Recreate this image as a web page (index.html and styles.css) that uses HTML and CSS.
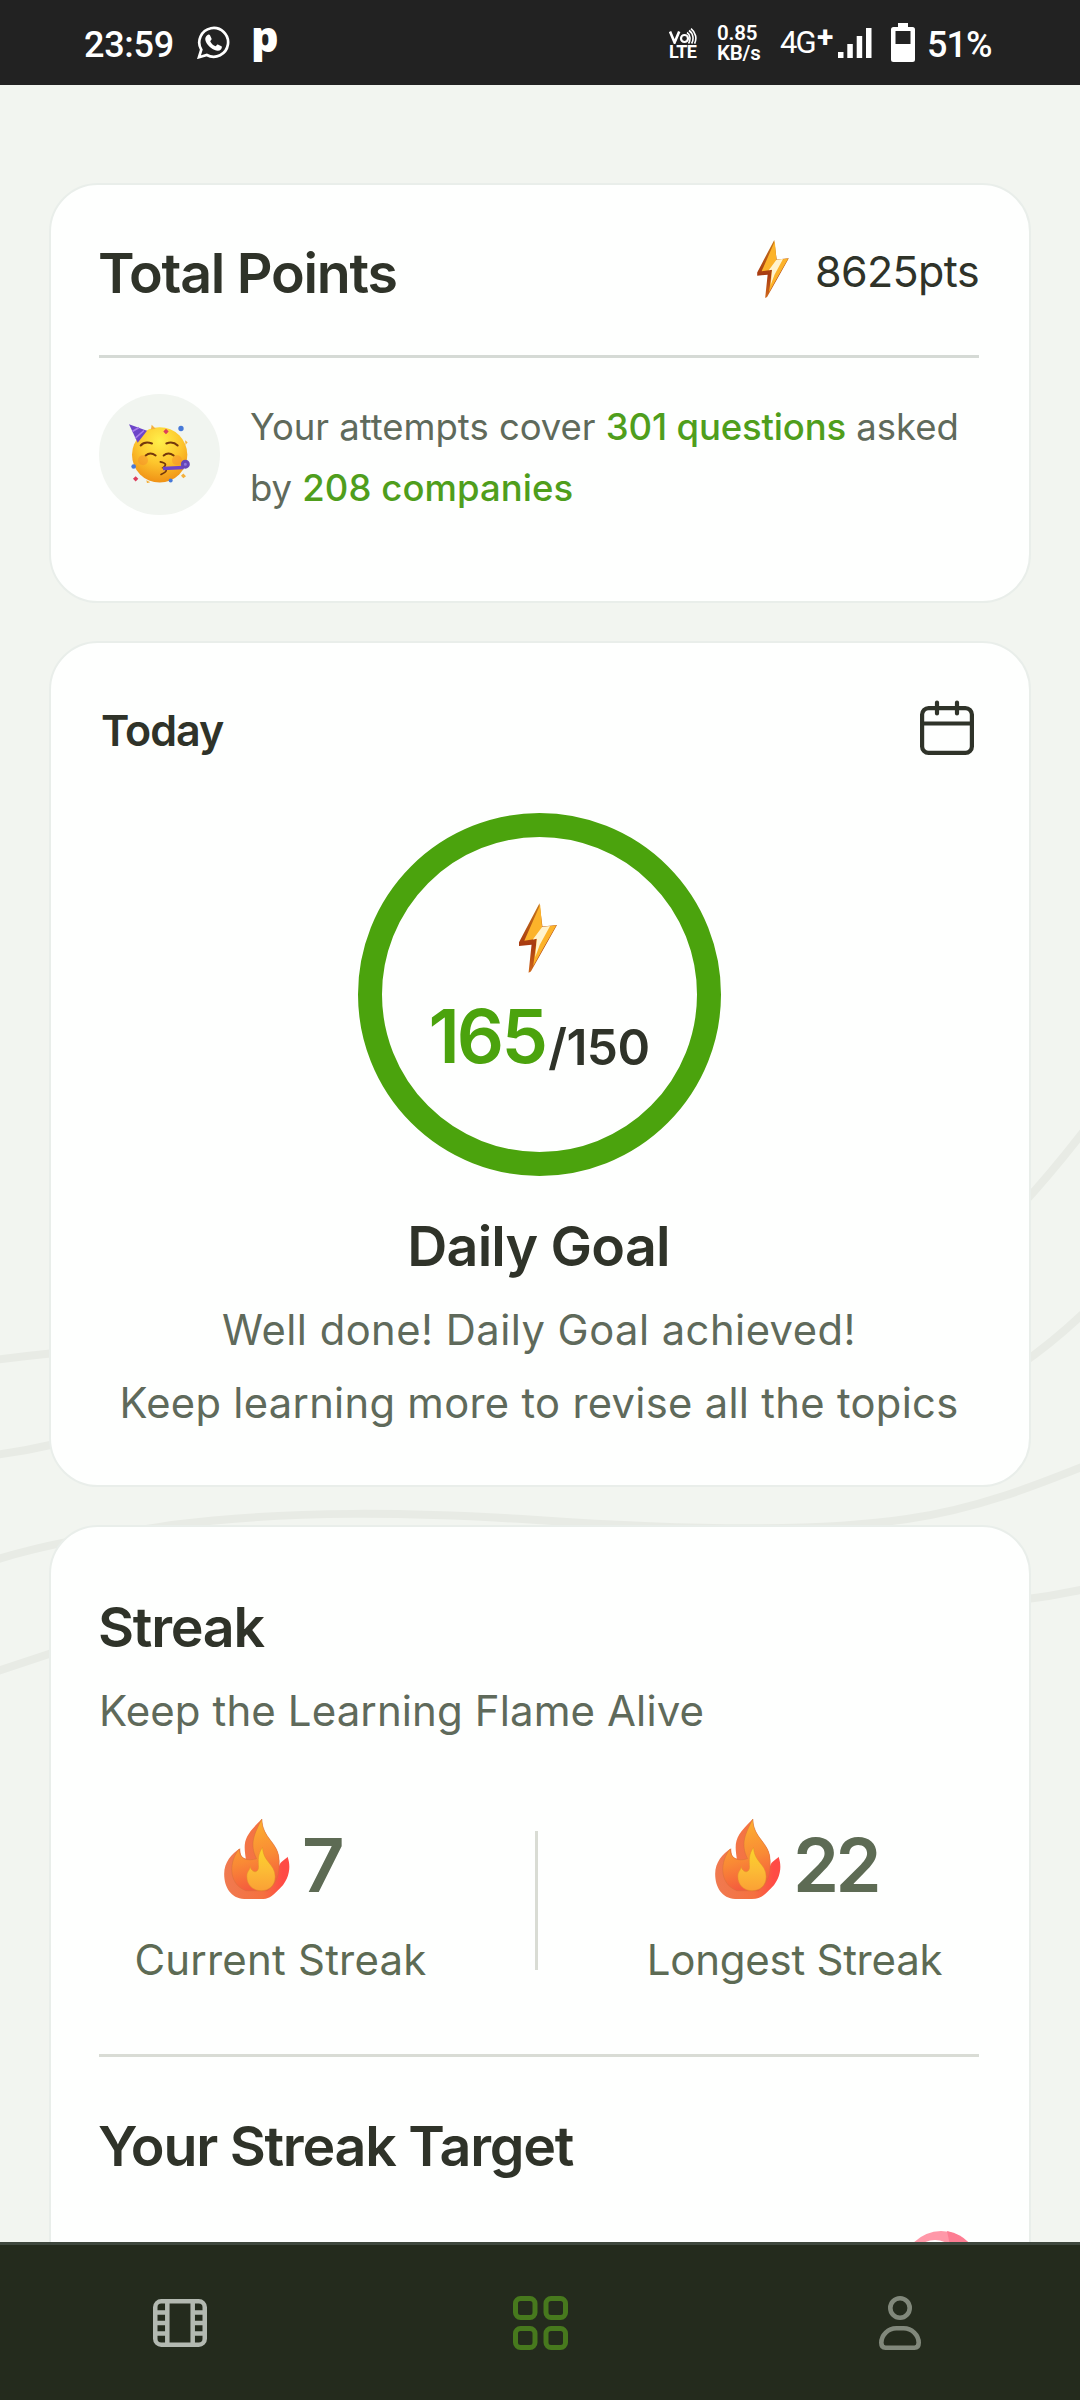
FILE: index.html
```html
<!DOCTYPE html>
<html lang="en">
<head>
<meta charset="utf-8">
<title>Progress</title>
<link rel="stylesheet" href="styles.css">
</head>
<body>
<svg class="defs" width="0" height="0" aria-hidden="true">
  <defs>
    <linearGradient id="flameBack" x1="0" y1="0" x2="1" y2="0">
      <stop offset="0" stop-color="#f07a50"/><stop offset=".6" stop-color="#f5713f"/><stop offset=".9" stop-color="#ff4b45"/>
    </linearGradient>
    <linearGradient id="flameFront" x1=".4" y1="0" x2=".6" y2="1">
      <stop offset="0" stop-color="#fdb32f"/><stop offset=".55" stop-color="#f98a35"/><stop offset="1" stop-color="#f4553f"/>
    </linearGradient>
    <linearGradient id="flameCore" x1="0" y1="0" x2="0" y2="1">
      <stop offset="0" stop-color="#fbd42a"/><stop offset=".5" stop-color="#fcbd35"/><stop offset="1" stop-color="#fba035"/>
    </linearGradient>
    <radialGradient id="face" cx=".5" cy=".25" r=".8">
      <stop offset="0" stop-color="#fff04a"/><stop offset=".5" stop-color="#fdc62d"/><stop offset="1" stop-color="#ee8a12"/>
    </radialGradient>
    <linearGradient id="boltEdge" x1="0" y1="0" x2="0" y2="1">
      <stop offset="0" stop-color="#c87a1c"/><stop offset=".6" stop-color="#a83a10"/><stop offset="1" stop-color="#d06a1c"/>
    </linearGradient>
    <symbol id="bolt" viewBox="0 0 115 211">
      <path fill="url(#boltEdge)" d="M62 0 0 118v12l38-4-9 85 7-4 79-141-44 5z"/>
      <path fill="#fcb32a" d="M64 5 16 114l38-6-11 82 70-123-43 6z"/>
      <path fill="#fff3cf" d="m70 72 24-3-31 57-14 38 5-56-12 2z"/>
    </symbol>
    <symbol id="flame" viewBox="0 0 197 240">
      <path fill="url(#flameBack)" d="M113 0C114 60 165 70 165 125v16c4-16 18-18 25-28 10 25 10 68-30 102-17 18-28 25-50 25H60C20 238 0 205 0 165c0-35 22-60 48-77 0 22 6 29 17 31C56 65 62 50 113 0z"/>
      <path fill="url(#flameFront)" stroke="#d5713a" stroke-width="1.500" d="M113 0C114 60 165 70 165 125c0 45-5 65-35 90H65C10 195 15 125 45 90c0 30 25 38 52 29C75 75 90 45 113 0z"/>
      <path fill="url(#flameCore)" stroke="#e08a2a" stroke-width="1.500" d="M115 85c2 45 38 50 38 88 0 28-20 42-42 42-25 0-43-18-43-42 0-18 10-18 10-31 5 22 25 20 25 3-1-22-3-38 12-60z"/>
    </symbol>
  </defs>
</svg>

<div class="screen">
  <header class="status">
    <div class="status-left">
      <span class="clock">23:59</span>
      <svg class="whatsapp" viewBox="0 0 33 33" width="33" height="33">
        <path fill="none" stroke="#fff" stroke-width="2.700" d="M2 31.200 4.300 23.700A14.400 14.400 0 1 1 9.800 29z"/>
        <path fill="#fff" d="M10.200 9.200c.8-1 2.300-1 2.800 0l1.500 3.300c.3.800-.1 1.400-1.300 2.700 1.300 2.600 3 4.200 5.500 5.100 1.500-1.700 1.900-1.900 2.600-1.600l3.200 1.600c.7.400.4 2.200-.6 3.200-1.600 1.500-3.900 1.500-6.800.3-4-1.700-7.600-5.500-8.700-9.500-.5-2 .3-4 1.800-5.100z"/>
      </svg>
      <span class="app-p">p</span>
    </div>
    <div class="status-right">
      <div class="volte">
        <svg viewBox="0 0 28 16" width="28" height="16" fill="none" stroke="#fff">
          <path stroke-width="2.600" d="m1 3.500 4.600 11 4.600-11"/><circle cx="15.500" cy="10.500" r="3.500" stroke-width="2.200"/>
          <path stroke-width="1.600" d="M18 4.500c3.500 2 3.800 8 1.500 11M20 2.500c4.500 3 5 9 2.600 13M22 .600c5 4 6 10 3.600 15"/>
        </svg>
        <span>LTE</span>
      </div>
      <div class="speed"><span>0.85</span><span>KB/s</span></div>
      <div class="net">4G<sup>+</sup></div>
      <svg class="signal" viewBox="0 0 34 30" width="34" height="30" fill="#fff"><path d="M0 24h5.500v6H0zM9.300 16h5.500v14H9.300zM18.700 8h5.500v22h-5.500zM28 0h5.500v30H28z"/></svg>
      <svg class="battery" viewBox="0 0 24 39" width="24" height="39"><path fill="#fff" fill-rule="evenodd" d="M7 0h10v4h4.500A2.500 2.500 0 0 1 24 6.500v30a2.500 2.500 0 0 1-2.500 2.500h-19A2.500 2.500 0 0 1 0 36.500v-30A2.500 2.500 0 0 1 2.500 4H7zM4.500 8v13h15V8z"/></svg>
      <span class="percent">51%</span>
    </div>
  </header>

  <main class="content">
    <svg class="waves" viewBox="0 0 1080 2157" width="1080" height="2157" fill="none">
      <path d="M-5 1275q30-4 60-7M-5 1370q30-4 60-11M-5 1475C60 1455 110 1450 172 1440c120-15 240-13 365-5 130 9 270 14 370-1 70-10 130-34 180-54M-5 1587q30-10 60-20M1020 1122q35-38 70-84M1020 1280q35-24 70-58M1020 1515q35-4 70-12"/>
    </svg>

    <section class="card points">
      <div class="points-head">
        <h2 class="title">Total Points</h2>
        <div class="score"><svg width="32" height="58"><use href="#bolt"/></svg><span>8625pts</span></div>
      </div>
      <hr>
      <div class="cover">
        <div class="badge">
          <svg viewBox="0 0 183 176" width="61" height="59">
            <circle cx="92" cy="92" r="83" fill="url(#face)"/>
            <path fill="#6c45c8" d="m0 0 54 20-28 36z"/><path stroke="#a77bea" stroke-width="5" d="m10 22 20-12M19 42l26-23"/>
            <g fill="none" stroke="#74380c" stroke-width="6" stroke-linecap="round"><path d="M35 64q12-14 34-6M112 58q20-8 34 6M50 94q14-12 30 0M104 94q14-12 30 0"/><path d="M94 113q26 5 8 18 22 8-6 20" stroke-width="5"/></g>
            <circle cx="42" cy="108" r="15" fill="#f58b2c" opacity=".45"/><circle cx="144" cy="108" r="15" fill="#f58b2c" opacity=".45"/>
            <path stroke="#6c45c8" stroke-width="10" d="m102 133 62-3"/><circle cx="169" cy="120" r="9" fill="#8f78dd" stroke="#6546b8" stroke-width="9"/>
            <g><path fill="#dd3d5c" d="m111 14 8 8-8 8-8-8zM20 156l8 8-8 8-8-8z"/><circle cx="156" cy="13" r="8" fill="#4779d8"/><circle cx="14" cy="127" r="7" fill="#4779d8"/><circle cx="125" cy="169" r="6" fill="#4779d8"/><path fill="#f4b13d" d="m68 2 12 12-14 2zM163 148l8 8-8 6-7-7zM168 48l8 6-6 8zM52 168l12 6-10 3z"/></g>
          </svg>
        </div>
        <p class="cover-text">Your attempts cover <b>301 questions</b> asked<br>by <b class="companies">208 companies</b></p>
      </div>
    </section>

    <section class="card today">
      <div class="today-head">
        <h3>Today</h3>
        <svg viewBox="0 0 54 55" width="54" height="55" fill="none" stroke="#2f3329" stroke-width="4.200" stroke-linecap="round"><rect x="2.100" y="8.100" width="49.800" height="44.800" rx="6.500"/><path d="M3 23.500h48M17 2.500v11M37 2.500v11"/></svg>
      </div>
      <div class="ring">
        <svg width="38" height="70"><use href="#bolt"/></svg>
        <div class="tally"><span class="done">165</span><span class="of">/150</span></div>
      </div>
      <h2 class="title goal">Daily Goal</h2>
      <p class="praise">Well done! Daily Goal achieved!</p>
      <p class="praise more">Keep learning more to revise all the topics</p>
    </section>

    <section class="card streak">
      <h2 class="title">Streak</h2>
      <p class="sub">Keep the Learning Flame Alive</p>
      <div class="stats">
        <div class="stat current">
          <div class="count"><svg width="66" height="80"><use href="#flame"/></svg><span>7</span></div>
          <p>Current Streak</p>
        </div>
        <div class="split"></div>
        <div class="stat longest">
          <div class="count"><svg width="66" height="80"><use href="#flame"/></svg><span>22</span></div>
          <p>Longest Streak</p>
        </div>
      </div>
      <hr>
      <h2 class="title">Your Streak Target</h2>
      <div class="target">
        <svg viewBox="0 0 76 76" width="76" height="76"><circle cx="38" cy="38" r="38" fill="#ff98a8"/><path fill="#fd7d92" d="M44 0a38 38 0 0 1 32 38H52z"/><circle cx="32" cy="34" r="25" fill="#fff"/></svg>
      </div>
    </section>
  </main>

  <nav class="tabs">
    <a><svg viewBox="0 0 54 48" width="54" height="48" fill="none" stroke="#b3b9b1" stroke-width="4.500"><rect x="2.250" y="2.250" width="49.500" height="43.500" rx="6"/><path d="M14.300 2v44M39.700 2v44"/><path d="M2 13.500h12M2 24h12M2 34.500h12M40 13.500h12M40 24h12M40 34.500h12"/></svg></a>
    <a><svg viewBox="0 0 55 54" width="55" height="54" fill="none" stroke="#47791d" stroke-width="5"><rect x="2.500" y="2.500" width="19.500" height="19" rx="5"/><rect x="33" y="2.500" width="19.500" height="19" rx="5"/><rect x="2.500" y="32.500" width="19.500" height="19" rx="5"/><rect x="33" y="32.500" width="19.500" height="19" rx="5"/></svg></a>
    <a><svg viewBox="0 0 42 54" width="42" height="54" fill="none" stroke="#81887b" stroke-width="4.600"><circle cx="21" cy="12" r="9.700"/><path d="M17.300 32.300h7.400c8 0 15 6.500 15 14.500 0 3-1.500 4.900-4.200 4.900h-29c-2.700 0-4.200-1.900-4.200-4.900 0-8 7-14.500 15-14.500z"/></svg></a>
  </nav>
</div>
</body>
</html>
```
FILE: styles.css
```css
* { box-sizing: border-box; margin: 0; padding: 0; }
body { background: #f2f5f0; font-family: Inter, "Liberation Sans", sans-serif; color: #2f3329; }
svg { display: block; flex: none; }
.defs { position: absolute; }

.screen { width: 1080px; height: 2400px; display: flex; flex-direction: column; overflow: hidden; }

.status { flex: none; height: 85px; background: #222; color: #fff; font-family: Roboto, sans-serif; display: flex; justify-content: space-between; padding: 0 86px 0 84px; }
.status-left, .status-right { display: flex; align-items: center; }
.clock, .percent { font-size: 36px; font-weight: 500; padding-top: 4px; }
.clock { width: 113px; letter-spacing: -.3px; }
.app-p { font: 800 43px/60px "Open Sans", sans-serif; margin-left: 21px; height: 73px; }
.volte { width: 28px; margin-right: 20px; padding-top: 2px; }
.volte span { display: block; font-size: 18px; line-height: 15px; font-weight: 700; letter-spacing: -.6px; }
.speed { display: flex; flex-direction: column; width: 44px; font-size: 20.500px; font-weight: 600; line-height: 20px; letter-spacing: -.2px; margin-right: 19px; }
.net { font-size: 31px; width: 50px; letter-spacing: -1.800px; display: flex; align-items: center; white-space: nowrap; margin-right: 8px; }
.net sup { font-size: 30px; font-weight: 700; line-height: 20px; margin: -11px 0 0 2px; }
.signal { margin-right: 19px; }
.battery { margin-right: 12px; }
.percent { width: 67px; letter-spacing: -.9px; }

.content { flex: 1; min-height: 0; position: relative; overflow: hidden; padding: 98px 49px 0; display: flex; flex-direction: column; gap: 38px; }
.waves { position: absolute; left: 0; top: 0; stroke: #e8ebe5; stroke-width: 8; }
.card { position: relative; flex: none; background: #fefffe; border: 2px solid #e9eeea; border-radius: 49px; padding: 50px 50px 0 48px; }
hr { border: 0; height: 3px; background: #d5dad5; }
.title { font-size: 55.500px; line-height: 60px; font-weight: 600; letter-spacing: -1.250px; text-indent: -1px; }

.points { height: 420px; }
.points-head { display: flex; justify-content: space-between; align-items: center; height: 76px; margin-bottom: 44px; }
.score { display: flex; align-items: center; gap: 26px; margin-top: -5px; }
.score svg { margin-top: -4px; }
.score span { font-size: 43px; letter-spacing: -.6px; }
.cover { display: flex; gap: 30px; margin-top: 36px; }
.badge { width: 121px; height: 121px; border-radius: 50%; background: #f1f5f0; display: flex; align-items: center; justify-content: center; }
.badge svg { margin-top: -3px; }
.cover-text { font-size: 36.500px; line-height: 61px; padding-top: 3px; color: #5f6a5b; letter-spacing: -.03px; white-space: nowrap; }
.cover-text b { font-weight: 450; color: #4f9e1c; letter-spacing: -.15px; }
.cover-text .companies { letter-spacing: .05px; }

.today { height: 846px; display: flex; flex-direction: column; align-items: center; }
.today-head { align-self: stretch; display: flex; justify-content: space-between; align-items: center; height: 74px; padding: 0 5px 0 2px; }
.today-head h3 { font-size: 43px; font-weight: 600; letter-spacing: -1px; }
.today-head svg { margin-top: -5px; }
.ring { width: 363px; height: 363px; border: 24px solid #4ba30d; border-radius: 50%; margin-top: 46px; padding-top: 66px; display: flex; flex-direction: column; align-items: center; }
.ring > svg { margin-left: -3px; }
.tally { display: flex; margin-top: 23px; line-height: 80px; }
.done { font-size: 74px; font-weight: 600; letter-spacing: -2.800px; color: #4ba30d; }
.of { font-size: 49.500px; font-weight: 600; letter-spacing: -.5px; margin: 11px 0 0 3px; }
.goal { margin-top: 40px; letter-spacing: -.8px; }
.praise { font-size: 41.700px; line-height: 73px; letter-spacing: .48px; color: #5f6a5b; margin-top: 18px; white-space: nowrap; }
.more { margin-top: 0; letter-spacing: .32px; }

.streak { height: 950px; padding-top: 70px; }
.sub { font-size: 42px; line-height: 60px; margin-top: 24px; letter-spacing: .1px; color: #5f6a5b; }
.stats { display: flex; justify-content: space-between; height: 166px; margin: 78px 0 69px; color: #5d6b54; }
.stat { display: flex; flex-direction: column; align-items: center; }
.current { width: 363px; }
.longest { width: 369px; }
.stat p { font-size: 42px; line-height: 50px; margin-top: 36px; letter-spacing: .2px; }
.longest p { letter-spacing: -.25px; }
.count { display: flex; align-items: center; gap: 12px; height: 80px; padding-left: 4px; }
.count span { font-size: 74px; line-height: 80px; font-weight: 600; letter-spacing: -3.500px; margin-top: 12px; }
.split { width: 3px; height: 139px; margin-top: 12px; background: #d9dcd4; }
.streak hr { background: #d9dcd5; margin-bottom: 59px; }
.target { display: flex; justify-content: flex-end; margin-top: 55px; }

.tabs { flex: none; height: 158px; background: #242b1d; border-top: 3px solid #3f483e; display: grid; grid-template-columns: repeat(3, 1fr); align-items: center; justify-items: center; padding-top: 1px; }
```
